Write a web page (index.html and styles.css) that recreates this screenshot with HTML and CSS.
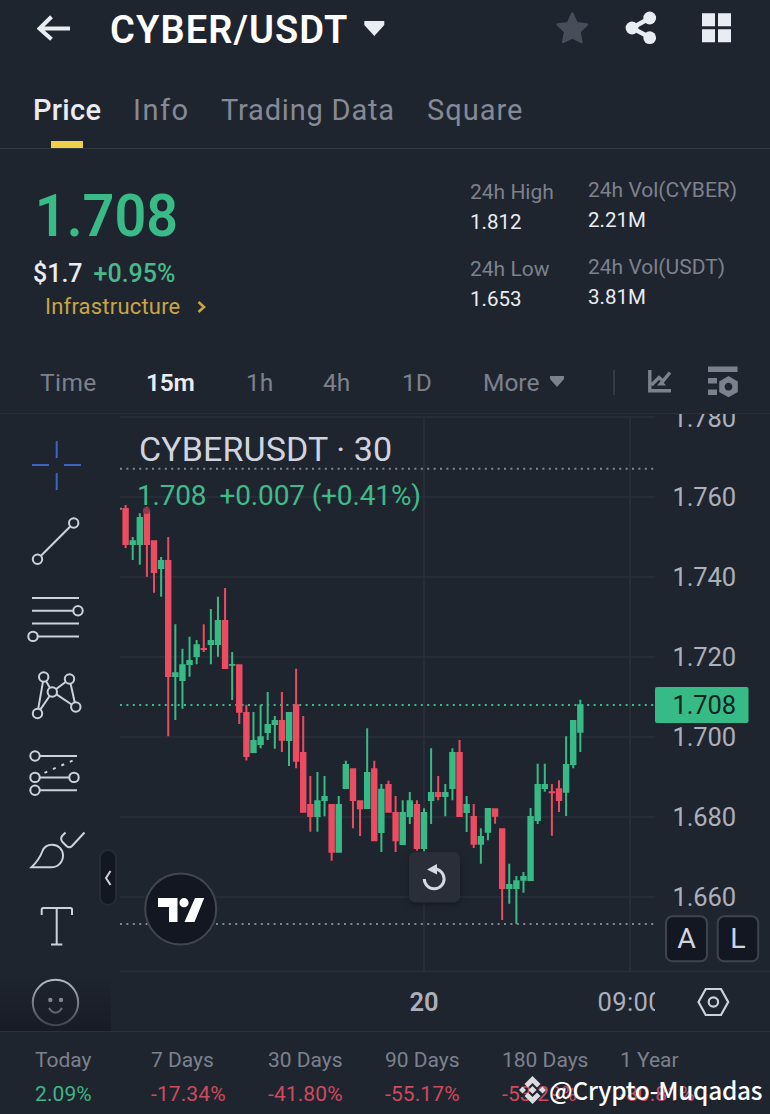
FILE: index.html
```html
<!DOCTYPE html>
<html lang="en">
<head>
<meta charset="utf-8">
<title>CYBER/USDT</title>
<link rel="stylesheet" href="styles.css">
</head>
<body>
<div class="app">
  <header class="header">
    <svg class="back" width="34" height="28" viewBox="37 15 34 28"><path d="M70 28.5H40M51.5 16.8L39.5 28.5L51.5 39.3" fill="none" stroke="#e9ecf2" stroke-width="4"/></svg>
    <h1 class="pair">CYBER/USDT</h1>
    <svg class="caret" width="22" height="16" viewBox="363 20 22 16"><path d="M364.3 21H384.3V25L374.3 36L364.3 25Z" fill="#e9ecf2"/></svg>
    <div class="actions">
      <svg width="34" height="34" viewBox="555 12 34 34"><path d="M572.3 14.5L576.6 24.2L587 25.4L579.4 32.8L581.4 43L572.3 38.4L563.2 43L565.2 32.8L557.6 25.4L568 24.2Z" fill="#474d59" stroke="#474d59" stroke-width="2.5" stroke-linejoin="round"/></svg>
      <svg width="32" height="34" viewBox="625 11 32 34"><path d="M650 18L632 28L650 37.5" fill="none" stroke="#e9ecf2" stroke-width="4.5"/><g fill="#e9ecf2"><circle cx="649.7" cy="18" r="6.4"/><circle cx="632" cy="28" r="6.4"/><circle cx="649.7" cy="37.7" r="6.4"/></g></svg>
      <svg width="30" height="30" viewBox="702 13 30 30"><path d="M702 13.3h13v13h-13zM718 13.3h13v13h-13zM702 29.3h13v13h-13zM718 29.3h13v13h-13z" fill="#e9ecf2"/></svg>
    </div>
  </header>

  <nav class="tabs">
    <span class="tab tab-active">Price</span>
    <span class="tab tab-info">Info</span>
    <span class="tab tab-data">Trading Data</span>
    <span class="tab tab-square">Square</span>
  </nav>

  <section class="summary">
    <div class="quote">
      <div class="last">1.708</div>
      <div class="change"><span class="fiat">$1.7</span><span class="pct">+0.95%</span></div>
      <div class="tag"><span>Infrastructure</span><svg width="10" height="14" viewBox="0 0 10 14"><path d="M1.5 2L7 7L1.5 12" fill="none" stroke="#c8a545" stroke-width="2.6"/></svg></div>
    </div>
    <dl class="stats stats-range">
      <dt class="high">24h High</dt><dd>1.812</dd>
      <dt class="low">24h Low</dt><dd>1.653</dd>
    </dl>
    <dl class="stats stats-vol">
      <dt class="vol-base">24h Vol(CYBER)</dt><dd>2.21M</dd>
      <dt class="vol-quote">24h Vol(USDT)</dt><dd>3.81M</dd>
    </dl>
  </section>

  <nav class="intervals">
    <span class="iv iv-time">Time</span>
    <span class="iv iv-active">15m</span>
    <span class="iv">1h</span>
    <span class="iv">4h</span>
    <span class="iv">1D</span>
    <span class="iv iv-more">More<svg width="14" height="12" viewBox="0 0 14 12"><path d="M0 0H14V3L7 11L0 3Z" fill="#7d818d"/></svg></span>
    <i class="divider"></i>
    <svg width="26" height="26" viewBox="647 367 26 26"><path d="M649.8 368V388.8H671M651.5 383L659 375.5L663 379L670 370.5" fill="none" stroke="#7d818d" stroke-width="3.4"/><path d="M661.5 378L666 383.5H657Z" fill="#7d818d"/></svg>
    <svg width="32" height="32" viewBox="707 366 32 32"><path d="M708 366.5h29.5v5.5H708zM708 378h9v5.5h-9zM708 389.5h9v5.5h-9z" fill="#7d818d"/><path fill-rule="evenodd" d="M728.5 376L737.8 381.5V392L728.5 397.3L719.2 392V381.5ZM728.5 382.8a3.9 3.9 0 1 0 .01 0Z" fill="#7d818d"/></svg>
  </nav>

  <main class="chart">
    <aside class="tools">
      <svg class="tool" viewBox="0 427 112 77"><path class="cursor" d="M32 465H49M64 465H81M56.7 441V458M56.7 473V490"/></svg>
      <svg class="tool" viewBox="0 504 112 77"><path d="M41 555.8L70.2 526.5"/><circle cx="73.7" cy="523" r="4.7"/><circle cx="37.5" cy="559.3" r="4.7"/></svg>
      <svg class="tool" viewBox="0 581 112 77"><path d="M32 598H79M32 610.7H73M32 623.5H79M38 636.4H79"/><circle cx="78" cy="610.7" r="4.7"/><circle cx="33" cy="636.4" r="4.7"/></svg>
      <svg class="tool" viewBox="0 658 112 77"><path d="M46 681L50 688M56.2 689L65.6 682M70.6 683.8L74.7 702.3M56.5 694.3L71.6 704.5M49.6 696L40.3 709.6M38.2 708.8L43 681.7"/><circle cx="43.7" cy="677" r="4.7"/><circle cx="69.5" cy="679" r="4.7"/><circle cx="52.3" cy="692" r="4.7"/><circle cx="75.8" cy="707" r="4.7"/><circle cx="37.5" cy="713.5" r="4.7"/></svg>
      <svg class="tool" viewBox="0 735 112 77"><path d="M40 756H77M40 777.4H69M40 790.3H77"/><path d="M44.5 772.8L74 760" stroke-dasharray="3 6.2"/><circle cx="35" cy="756" r="4.7"/><circle cx="35" cy="777.4" r="4.7"/><circle cx="74" cy="777.4" r="4.7"/><circle cx="35" cy="790.3" r="4.7"/></svg>
      <svg class="tool" viewBox="0 812 112 77"><path d="M31.5 867.3C38 861 41 855 42.5 851C44 847 47.5 844.7 52 844.7C58.5 844.7 63 849.5 63 855.5C63 862 58 867.3 51 867.3Z"/><path d="M65.5 832.5L62.5 835.5C60.8 837.5 60.8 840 62.5 842L66.5 846C68.5 847.8 70.5 847.5 72 846L84.5 832.5"/></svg>
      <svg class="tool" viewBox="0 889 112 77"><path d="M41.7 915V909.5Q41.7 908 43.2 908H70.5Q72 908 72 909.5V915M56.7 908V944.5M51 944.5H62.3"/></svg>
      <svg class="tool" viewBox="0 966 112 77"><circle cx="55.5" cy="1002.5" r="22.7"/><path d="M49 1008Q55.5 1017.5 62 1008"/><g class="eyes"><circle cx="50.3" cy="1000" r="2.2"/><circle cx="61" cy="1000" r="2.2"/></g></svg>
      <div class="tools-fade"></div>
    </aside>

    <svg class="pane" width="535" height="617" viewBox="120 414 535 617">
      <path class="grid" d="M120 417H655M120 497H655M120 577H655M120 657H655M120 737H655M120 817H655M120 897H655M120 971.5H655M424 417V971M630 417V971"/>
      <path class="dots" d="M120 468.7H655M120 924H655"/>
      <path class="dots" d="M120 508.7H124"/>
      <path class="dots dots-last" d="M120 705H655"/>
      <g id="candles"></g>
      <circle cx="146.5" cy="510.5" r="3.5" fill="#8f3a4a"/>
      <text class="symbol" x="139" y="461" textLength="253" lengthAdjust="spacing">CYBERUSDT · 30</text>
      <text class="ohlc" x="137" y="504.5" textLength="69.5">1.708</text>
      <text class="ohlc" x="219.5" y="504.5" textLength="201.5">+0.007 (+0.41%)</text>
      <circle cx="180.7" cy="909" r="35.5" fill="#131722" stroke="#434651" stroke-width="2"/>
      <path d="M158 898H177.5V922H169V907H158ZM195 898H204.2L194.5 922H184.5Z" fill="#fff"/><circle cx="184" cy="902.7" r="4.6" fill="#fff"/>
      <rect class="reset" x="409" y="852" width="51" height="50.5" rx="6"/>
      <path d="M424.3 879A9.9 9.9 0 1 0 434 869" fill="none" stroke="#d6d9e3" stroke-width="3"/><path d="M427 869.5L437 864V874.5Z" fill="#d6d9e3"/>
      <text class="axis axis-day" x="409.5" y="1010.5" textLength="29">20</text>
      <text class="axis" x="597.5" y="1010.5" textLength="65">09:00</text>
    </svg>

    <svg class="scale" width="115" height="617" viewBox="655 414 115 617">
      <path class="grid" d="M655 971.5H770"/>
      <g class="axis">
        <text x="672.5" y="427" textLength="63.5">1.780</text>
        <text x="672.5" y="506" textLength="63.5">1.760</text>
        <text x="672.5" y="586" textLength="63.5">1.740</text>
        <text x="672.5" y="666" textLength="63.5">1.720</text>
        <text x="672.5" y="746" textLength="63.5">1.700</text>
        <text x="672.5" y="826" textLength="63.5">1.680</text>
        <text x="672.5" y="906" textLength="63.5">1.660</text>
      </g>
      <rect x="655" y="687" width="93.5" height="36" rx="2" fill="#36bb86"/>
      <text class="axis axis-last" x="672.5" y="714.4" textLength="63.5">1.708</text>
      <g class="mode"><rect x="666" y="916.3" width="41" height="45" rx="6.5"/><rect x="717.7" y="916.3" width="40.5" height="45" rx="6.5"/></g>
      <text class="mode-label" x="686.5" y="948">A</text>
      <text class="mode-label" x="738" y="948">L</text>
      <path d="M698.5 1002L705.7 989H721L728.2 1002L721 1015H705.7Z" fill="none" stroke="#ced1dc" stroke-width="2.2"/><circle cx="713.4" cy="1002" r="4.7" fill="none" stroke="#ced1dc" stroke-width="2.2"/>
    </svg>

    <div class="collapse"><svg width="8" height="18" viewBox="0 0 8 18"><path d="M6.5 2L2 9L6.5 16" fill="none" stroke="#ced1dc" stroke-width="2"/></svg></div>
  </main>

  <footer class="returns">
    <div><span class="r-today">Today</span><b class="up">2.09%</b></div>
    <div><span>7 Days</span><b>-17.34%</b></div>
    <div><span>30 Days</span><b>-41.80%</b></div>
    <div><span>90 Days</span><b>-55.17%</b></div>
    <div><span>180 Days</span><b>-53.29%</b></div>
    <div><span>1 Year</span><b>-80.81%</b></div>
    <div class="credit">
      <svg width="27" height="28" viewBox="0 0 27 28"><g fill="#dcdcdf"><path d="M13.5 0L21.5 8L18 11.5L13.5 7L9 11.5L5.5 8ZM13.5 28L21.5 20L18 16.5L13.5 21L9 16.5L5.5 20ZM13.5 10L17.5 14L13.5 18L9.5 14ZM3.5 10.5L7 14L3.5 17.5L0 14ZM23.5 10.5L27 14L23.5 17.5L20 14Z"/></g></svg>
      <span>@Crypto-Muqadas</span>
    </div>
  </footer>
</div>
<script src="chart.js"></script>
</body>
</html>
```
FILE: styles.css
```css
* { box-sizing: border-box; margin: 0; padding: 0; }
body {
  width: 770px;
  height: 1114px;
  overflow: hidden;
  background: #1f252f;
  color: #eaecf2;
  font-family: Roboto, "Liberation Sans", sans-serif;
}
svg { display: block; flex: none; }
.app { display: flex; flex-direction: column; width: 770px; height: 1114px; }

.header { display: flex; align-items: center; height: 59px; padding-left: 37px; }
.back { margin-top: -2px; }
.pair { width: 253px; margin-left: 39px; padding-top: 2px; font-size: 38px; font-weight: 600; line-height: 59px; letter-spacing: 1.1px; color: #fff; white-space: nowrap; }
.caret { margin-top: -3px; }
.actions { display: flex; align-items: center; gap: 36px; margin: -3px 0 0 170px; }
.actions svg:last-child { margin-left: 9px; }

.tabs {
  display: grid;
  grid-template-columns: 100px 88px 205px auto;
  height: 90px;
  padding: 31px 0 0 33px;
  border-bottom: 1px solid #343a44;
  font-size: 29px;
  line-height: 40px;
  color: #868a96;
  white-space: nowrap;
}
.tab { letter-spacing: 0.8px; }
.tab-active { position: relative; font-weight: 500; letter-spacing: 0.3px; color: #eaecf2; }
.tab-info { letter-spacing: 1.5px; }
.tab-square { padding-left: 1px; letter-spacing: 1px; }
.tab-active::after { content: ""; position: absolute; left: 18px; top: 51px; width: 32px; height: 7px; background: #f0cf4a; }

.summary { display: grid; grid-template-columns: 437px 118px 182px; height: 202px; padding-left: 33px; white-space: nowrap; }
.last { margin-top: 34px; padding-left: 2px; font-size: 60px; font-weight: 600; line-height: 66px; transform: scaleX(0.93); transform-origin: left; color: #38bb87; }
.change { display: flex; gap: 11px; margin-top: 10px; font-size: 25px; font-weight: 500; line-height: 30px; }
.pct { color: #48b98a; }
.tag { display: flex; align-items: center; gap: 17px; padding-left: 12px; margin-top: 3px; font-size: 22px; line-height: 30px; letter-spacing: 0.2px; color: #c8a545; }
.stats { padding-top: 30px; font-size: 21px; line-height: 26px; }
.stats-vol { padding-top: 28px; }
.stats dt { color: #7d818d; }
.stats dd { margin: 4px 0 21px; font-size: 20.5px; }

.intervals {
  display: grid;
  grid-template-columns: 106px 100px 77px 79px 81px 130px 34px 60px 32px;
  align-items: center;
  height: 63px;
  padding-left: 40px;
  border-bottom: 1px solid #2a303a;
  font-size: 24.5px;
  line-height: 30px;
  color: #7d818d;
  white-space: nowrap;
}
.iv { padding-top: 2px; }
.iv-time { letter-spacing: 0.4px; }
.iv-active { font-weight: 600; letter-spacing: -0.3px; color: #eaecf2; }
.iv-more { display: flex; align-items: center; gap: 11px; }
.iv-more svg { margin-top: -2px; }
.divider { width: 2px; height: 25px; background: #343943; }

.chart { position: relative; display: grid; grid-template-columns: 120px 535px 115px; height: 617px; overflow: hidden; }
.tools { position: relative; height: 617px; padding-top: 13px; overflow: hidden; }
.tool { width: 112px; height: 77px; fill: none; stroke: #ced1dc; stroke-width: 2; }
.tool .cursor { stroke: #3e63c6; }
.tool .eyes { fill: #ced1dc; stroke: none; }
.tools-fade { position: absolute; left: 0; bottom: 0; width: 111px; height: 60px; background: linear-gradient(rgba(22, 26, 37, 0), rgba(22, 26, 37, 0.85)); }
.collapse { position: absolute; left: 99px; top: 435px; display: flex; align-items: center; justify-content: center; width: 18px; height: 57px; border: 2px solid #262b36; border-radius: 9px; background: #131722; }

.pane, .scale { font-family: Roboto, "Liberation Sans", sans-serif; }
.grid { fill: none; stroke: #2b313b; stroke-width: 1.6; }
.dots { fill: none; stroke: #82868f; stroke-width: 2; stroke-dasharray: 2 4.4; }
.dots-last { stroke: #3dba88; }
.candle-up { fill: #38ba86; }
.candle-down { fill: #ec4c62; }
.symbol { font-size: 34px; fill: #d1d4df; }
.ohlc { font-size: 28px; fill: #3fba89; }
.axis { font-size: 25.5px; fill: #adb0ba; }
.axis-day { font-weight: 600; }
.axis-last { fill: #10231f; }
.reset { fill: #292e39; filter: drop-shadow(0 2px 3px rgba(0, 0, 0, 0.35)); }
.mode rect { fill: #131722; stroke: #3f434e; stroke-width: 2; }
.mode-label { font-size: 28.5px; fill: #d1d4df; text-anchor: middle; }

.returns {
  position: relative;
  display: grid;
  grid-template-columns: 116px 117px 117px 117px 118px 149px;
  height: 83px;
  padding: 15px 0 0 35px;
  border-top: 1px solid #2c323c;
  font-size: 21px;
  line-height: 26px;
  white-space: nowrap;
}
.returns span, .returns b { display: block; font-weight: 400; }
.returns div > span { color: #7d818d; }
.returns b { margin-top: 8px; letter-spacing: 0.1px; color: #d04a5d; }
.returns .up { color: #3db684; }
.returns .credit { position: absolute; left: 519px; top: 41px; display: flex; align-items: center; gap: 3px; height: 34px; }
.returns .credit span { font-family: "Noto Sans CJK SC", "Noto Sans", sans-serif; font-size: 24.4px; font-weight: 500; line-height: 32px; letter-spacing: -0.25px; color: #fff; }
```
FILE: chart.js
```js
// direction, high, body top, body bottom, low (canvas y, one row per bar)
const bars = [
  ["d",505,508,545,548],["u",537,540.3,545,560],["u",513.3,517,545,564.7],["d",506.7,510,545,576.7],
  ["d",540.3,540.3,573,592.7],["u",557,560,569,596.7],["d",537,560,677,736.3],["u",624.3,672.3,677,720],
  ["u",648.7,664.3,681,708.7],["u",636.7,660,665,676.7],["u",640,644.3,657,664.3],["d",624.3,648,650,652],
  ["u",609,640,645,664.3],["u",596.7,620,645,656.7],["d",588,620,669,669],["u",652,664,665.7,700],
  ["d",664.3,664.3,712.7,724],["d",704.7,712,757,760.5],["u",712,740,753,753],["u",704.7,736.3,745,748.3],
  ["u",692,724,733,740],["u",716,720,725,748.7],["d",692,720,740.7,752],["u",712,712,741,766],
  ["d",668.7,704.3,761.7,768.3],["d",716,752,812.7,812.7],["d",776,804,817,831.7],["u",772,800.3,817,831.7],
  ["u",776,796,801,816.3],["d",804,804,852.7,860.7],["u",796,804,852.7,852.7],["u",760.7,764,789,789],
  ["d",768.3,768.3,801,828.3],["d",800.3,800.3,809.3,836],["u",728.3,772,809,809],["d",760.7,768.3,841.3,841.3],
  ["u",784,788.7,833,852],["d",780.7,784,812.7,812.7],["d",796,812,841.3,852],["u",800.3,812,845,845],
  ["u",792,800.3,817,824],["d",800.3,804,849,850.7],["u",808.3,812,849,851.3],["u",748.3,792,801,824],
  ["d",776,792,797,800.3],["u",784,792,797,816.3],["u",748.3,752,789,800.3],["d",740,752,817,817],
  ["u",796,804,813,832],["d",804,816,844.7,848],["u",828.3,836,844.7,863.7],["u",808,808,832.7,840.3],
  ["d",808.3,808.3,816.7,823.7],["d",828.3,828.3,889,920],["u",863.7,884,889,903.7],["u",876,880.3,889,923.7],
  ["u",872,876,880.7,892.7],["u",808,816,881,881],["u",763.7,784,821,824],["u",763.7,784,789,791.7],
  ["d",784,791.3,793.3,835.7],["d",780.3,788.3,801,812],["u",736.3,764,792.7,816],["u",720,720,765,768.3],
  ["u",699.7,704.3,732.7,752]
];
const ns = "http://www.w3.org/2000/svg";
const layer = document.getElementById("candles");
bars.forEach(([dir, high, top, bottom, low], i) => {
  const x = 125.6 + i * 7.105;
  const path = document.createElementNS(ns, "path");
  path.setAttribute("class", dir === "u" ? "candle-up" : "candle-down");
  path.setAttribute("d", `M${x - 1} ${high}h2V${low}h-2ZM${x - 3.2} ${top}h6.4V${bottom}h-6.4Z`);
  layer.appendChild(path);
});
```
